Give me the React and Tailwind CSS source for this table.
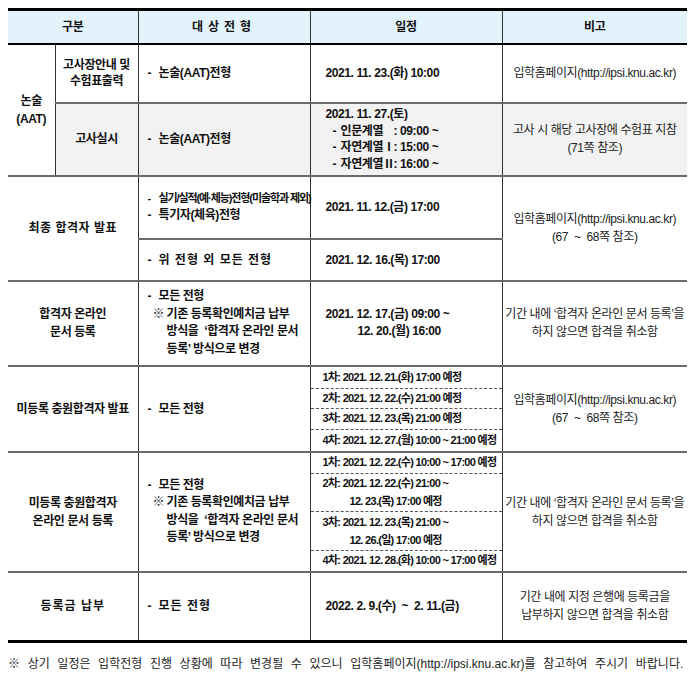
import React from "react";

const font = "font-['Liberation_Sans','Noto_Sans_CJK_KR',sans-serif]";

// vertical line on the right of a cell
const vr = "border-r border-r-[#333]";
const hr = "border-b-2 border-b-[#6a6a6a]";

function Dash({ children, className = "" }) {
  return (
    <div className={`flex whitespace-nowrap ${className}`}>
      <span className="w-[11px] shrink-0">-</span>
      <span>{children}</span>
    </div>
  );
}

function Notice() {
  return (
    <div className="leading-[17.5px] whitespace-nowrap">
      <Dash>모든 전형</Dash>
      <div className="flex pl-[5px]">
        <span className="w-[14px] shrink-0">※</span>
        <span>기존 등록확인예치금 납부</span>
      </div>
      <div className="pl-[19px]">방식을 &nbsp;‘합격자 온라인 문서</div>
      <div className="pl-[19px]">등록’ 방식으로 변경</div>
    </div>
  );
}

function SubRow({ h, last, children, className = "" }) {
  return (
    <div
      className={`flex items-center pl-[12px] whitespace-nowrap ${h} ${
        last ? "" : "border-b border-dashed border-b-[#555]"
      } ${className}`}
    >
      {children}
    </div>
  );
}

function Term({ label, time }) {
  return (
    <div className="flex pl-[7px] whitespace-nowrap">
      <span className="w-[8px]">-</span>
      <span className="w-[53px]">{label}</span>
      <span>: {time} ~</span>
    </div>
  );
}

export default function App() {
  return (
    <div className={`w-[699px] h-[684px] bg-white text-[#111] ${font} text-[12px] tracking-[-0.4px]`}>
      <div className="pt-[8px] pl-[8px]">
        <table className="w-[679px] table-fixed border-collapse border-t-[3px] border-t-black border-b-[3px] border-b-black">
          <colgroup>
            <col className="w-[47px]" />
            <col className="w-[83px]" />
            <col className="w-[172px]" />
            <col className="w-[192px]" />
            <col className="w-[185px]" />
          </colgroup>
          <thead>
            <tr className="h-[34px] bg-[#E3F3FC] border-b-2 border-b-black font-bold">
              <th colSpan={2} className={`${vr} font-bold`}>구분</th>
              <th className={`${vr} font-bold tracking-[5px]`}>대상전형</th>
              <th className={`${vr} font-bold`}>일정</th>
              <th className="font-bold">비고</th>
            </tr>
          </thead>
          <tbody>
            {/* 논술 */}
            <tr className="h-[59px]">
              <td rowSpan={2} className={`${vr} text-center font-bold leading-[18px]`}>
                논술
                <br />
                (AAT)
              </td>
              <td className={`${vr} ${hr} text-center font-bold leading-[16px]`}>
                고사장안내 및
                <br />
                수험표출력
              </td>
              <td className={`${vr} ${hr} pl-[9px] font-bold`}>
                <Dash>논술(AAT)전형</Dash>
              </td>
              <td className={`${vr} ${hr} pl-[15px] font-bold`}>2021. 11. 23.(화) 10:00</td>
              <td className={`${hr} text-center text-[#222] whitespace-nowrap`}>입학홈페이지(http://ipsi.knu.ac.kr)</td>
            </tr>
            <tr className={`h-[73px] ${hr}`}>
              <td className={`${vr} bg-[#F2F2F2] text-center font-bold`}>고사실시</td>
              <td className={`${vr} bg-[#F2F2F2] pl-[9px] font-bold`}>
                <Dash>논술(AAT)전형</Dash>
              </td>
              <td className={`${vr} bg-[#F2F2F2] pl-[15px] font-bold leading-[16.5px]`}>
                <div>2021. 11. 27.(토)</div>
                <Term label="인문계열" time="09:00" />
                <Term label="자연계열Ⅰ" time="15:00" />
                <Term label="자연계열Ⅱ" time="16:00" />
              </td>
              <td className="bg-[#F2F2F2] text-center text-[#222] leading-[18px]">
                고사 시 해당 고사장에 수험표 지참
                <br />
                (71쪽 참조)
              </td>
            </tr>

            {/* 최종 합격자 발표 */}
            <tr className="h-[63px]">
              <td colSpan={2} rowSpan={2} className={`${vr} ${hr} text-center font-bold tracking-[0.5px]`}>
                최종 합격자 발표
              </td>
              <td className={`${vr} ${hr} pl-[9px] font-bold leading-[17px]`}>
                <Dash className="text-[11px] tracking-[-1.1px]">실기/실적(예·체능)전형(미술학과 제외)</Dash>
                <Dash>특기자(체육)전형</Dash>
              </td>
              <td className={`${vr} ${hr} pl-[15px] font-bold`}>2021. 11. 12.(금) 17:00</td>
              <td rowSpan={2} className={`${hr} text-center text-[#222] leading-[18px] whitespace-nowrap`}>
                입학홈페이지(http://ipsi.knu.ac.kr)
                <br />
                (67 &nbsp;~ &nbsp;68쪽 참조)
              </td>
            </tr>
            <tr className="h-[42px]">
              <td className={`${vr} ${hr} pl-[9px] font-bold tracking-[1px]`}>
                <Dash>위 전형 외 모든 전형</Dash>
              </td>
              <td className={`${vr} ${hr} pl-[15px] font-bold`}>2021. 12. 16.(목) 17:00</td>
            </tr>

            {/* 합격자 온라인 문서 등록 */}
            <tr className={`h-[85px] ${hr}`}>
              <td colSpan={2} className={`${vr} text-center font-bold leading-[18px]`}>
                합격자 온라인
                <br />
                문서 등록
              </td>
              <td className={`${vr} pl-[9px] font-bold`}>
                <Notice />
              </td>
              <td className={`${vr} pl-[15px] font-bold leading-[17px]`}>
                <div>2021. 12. 17.(금) 09:00 ~</div>
                <div className="pl-[32px]">12. 20.(월) 16:00</div>
              </td>
              <td className="text-center text-[#222] leading-[18px] whitespace-nowrap">
                기간 내에 ‘합격자 온라인 문서 등록’을
                <br />
                하지 않으면 합격을 취소함
              </td>
            </tr>

            {/* 미등록 충원합격자 발표 */}
            <tr className={`h-[84px] ${hr}`}>
              <td colSpan={2} className={`${vr} text-center font-bold whitespace-nowrap`}>미등록 충원합격자 발표</td>
              <td className={`${vr} pl-[9px] font-bold`}>
                <Dash>모든 전형</Dash>
              </td>
              <td className={`${vr} p-0 font-bold text-[11px] tracking-[-0.7px]`}>
                <SubRow h="h-[22px]">1차: 2021. 12. 21.(화) 17:00 예정</SubRow>
                <SubRow h="h-[20px]">2차: 2021. 12. 22.(수) 21:00 예정</SubRow>
                <SubRow h="h-[21px]">3차: 2021. 12. 23.(목) 21:00 예정</SubRow>
                <SubRow h="h-[21px]" last>
                  4차: 2021. 12. 27.(월) 10:00 ~ 21:00 예정
                </SubRow>
              </td>
              <td className="text-center text-[#222] leading-[18px] whitespace-nowrap">
                입학홈페이지(http://ipsi.knu.ac.kr)
                <br />
                (67 &nbsp;~ &nbsp;68쪽 참조)
              </td>
            </tr>

            {/* 미등록 충원합격자 온라인 문서 등록 */}
            <tr className={`h-[118px] ${hr}`}>
              <td colSpan={2} className={`${vr} text-center font-bold leading-[18px]`}>
                미등록 충원합격자
                <br />
                온라인 문서 등록
              </td>
              <td className={`${vr} pl-[9px] font-bold`}>
                <Notice />
              </td>
              <td className={`${vr} p-0 font-bold text-[11px] tracking-[-0.7px]`}>
                <SubRow h="h-[21px]">1차: 2021. 12. 22.(수) 10:00 ~ 17:00 예정</SubRow>
                <SubRow h="h-[38px]">
                  <div className="leading-[18px]">
                    <div>2차: 2021. 12. 22.(수) 21:00 ~</div>
                    <div className="pl-[27px]">12. 23.(목) 17:00 예정</div>
                  </div>
                </SubRow>
                <SubRow h="h-[39px]">
                  <div className="leading-[18px]">
                    <div>3차: 2021. 12. 23.(목) 21:00 ~</div>
                    <div className="pl-[27px]">12. 26.(일) 17:00 예정</div>
                  </div>
                </SubRow>
                <SubRow h="h-[20px]" last>
                  4차: 2021. 12. 28.(화) 10:00 ~ 17:00 예정
                </SubRow>
              </td>
              <td className="text-center text-[#222] leading-[18px] whitespace-nowrap">
                기간 내에 ‘합격자 온라인 문서 등록’을
                <br />
                하지 않으면 합격을 취소함
              </td>
            </tr>

            {/* 등록금 납부 */}
            <tr className="h-[70px]">
              <td colSpan={2} className={`${vr} text-center font-bold tracking-[1px]`}>등록금 납부</td>
              <td className={`${vr} pl-[9px] font-bold tracking-[1px]`}>
                <Dash>모든 전형</Dash>
              </td>
              <td className={`${vr} pl-[15px] font-bold`}>2022. 2. 9.(수) &nbsp;~ &nbsp;2. 11.(금)</td>
              <td className="text-center text-[#222] leading-[18px] whitespace-nowrap">
                기간 내에 지정 은행에 등록금을
                <br />
                납부하지 않으면 합격을 취소함
              </td>
            </tr>
          </tbody>
        </table>

        <p className="mt-[12px] text-[#222] text-[12px] tracking-[0px] [word-spacing:4.3px] whitespace-nowrap">
          ※ 상기 일정은 입학전형 진행 상황에 따라 변경될 수 있으니 입학홈페이지(http://ipsi.knu.ac.kr)를 참고하여 주시기 바랍니다.
        </p>
      </div>
    </div>
  );
}
